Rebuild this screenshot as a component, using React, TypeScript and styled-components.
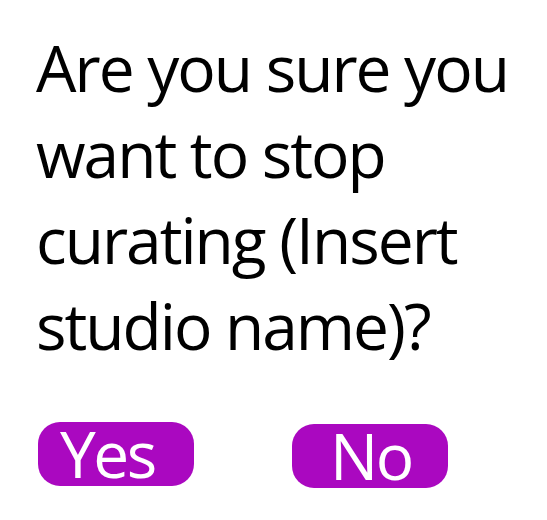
import React from "react";
import styled, { createGlobalStyle } from "styled-components";

const Global = createGlobalStyle`
  html, body { margin: 0; padding: 0; background: #fff; }
  body { font-family: "Open Sans", "Noto Sans", sans-serif; }
`;

const Dialog = styled.div`
  padding: 25px 0 0 36px;
  display: flex;
  flex-direction: column;
`;

const Question = styled.h1`
  margin: 0;
  font-weight: 400;
  font-size: 64px;
  letter-spacing: -2px;
  line-height: 86px;
  color: #000;
  width: 500px;
`;

const Actions = styled.div`
  display: flex;
  gap: 98px;
  margin-top: 53px;
  padding-left: 2px;
  align-items: flex-start;
`;

const Button = styled.button<{ $offset?: number; $indent: number }>`
  width: 156px;
  height: 64px;
  margin-top: ${(p) => p.$offset ?? 0}px;
  border: none;
  border-radius: 22px;
  background: #aa08c0;
  color: #fff;
  font-family: "Open Sans", "Noto Sans", sans-serif;
  font-size: 64px;
  letter-spacing: -2.5px;
  line-height: 64px;
  padding: 0 0 0 ${(p) => p.$indent}px;
  display: flex;
  align-items: flex-start;
  justify-content: flex-start;
  white-space: nowrap;
  overflow: visible;
`;

export default function App() {
  return (
    <>
      <Global />
      <Dialog>
        <Question>Are you sure you want to stop curating (Insert studio name)?</Question>
        <Actions>
          <Button $indent={22}>Yes</Button>
          <Button $offset={2} $indent={38}>No</Button>
        </Actions>
      </Dialog>
    </>
  );
}
